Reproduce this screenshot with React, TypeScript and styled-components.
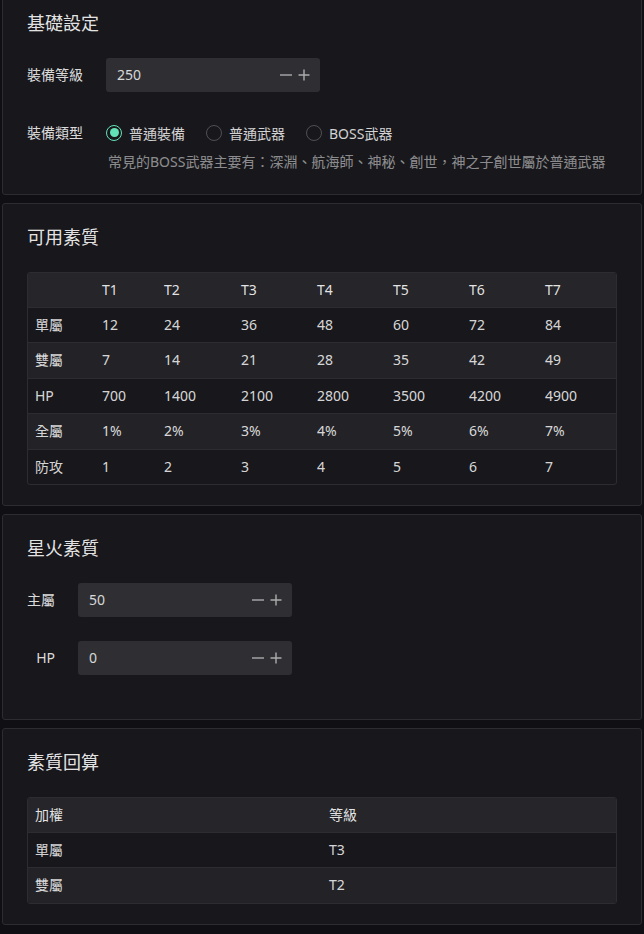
import React from "react";
import styled, { createGlobalStyle } from "styled-components";

const GlobalStyle = createGlobalStyle`
  body {
    margin: 0;
    background: #101014;
    color: rgba(255, 255, 255, 0.82);
    font-family: "Noto Sans", "Noto Sans CJK TC", sans-serif;
    font-size: 14px;
    overflow: hidden;
  }
`;

const Page = styled.div`
  display: flex;
  flex-direction: column;
  gap: 8px;
  padding: 0 2px;
  margin-top: -11px;
`;

const Card = styled.section`
  background: #18181c;
  border: 1px solid #2d2d31;
  border-radius: 3px;
`;

const CardTitle = styled.h2`
  margin: 0;
  padding: 19px 24px 20px;
  font-size: 18px;
  font-weight: 400;
  line-height: 28.8px;
  color: rgba(255, 255, 255, 0.9);
`;

const CardBody = styled.div`
  padding: 0 24px 20px;
`;

const FormItem = styled.div<{ $labelWidth: number }>`
  display: grid;
  grid-template-columns: ${(p) => p.$labelWidth}px 1fr;
  grid-template-rows: 34px 24px;
`;

const Label = styled.label`
  line-height: 34px;
  padding-right: 23px;
  text-align: right;
  white-space: nowrap;
  color: rgba(255, 255, 255, 0.86);
`;

const Feedback = styled.div`
  grid-column: 2;
  line-height: 24px;
  color: rgba(255, 255, 255, 0.52);
  white-space: nowrap;
  padding-left: 2px;
`;

const InputBox = styled.div`
  width: 214px;
  height: 34px;
  box-sizing: border-box;
  display: flex;
  align-items: center;
  padding: 0 8px 0 11px;
  background: #2f2f33;
  border-radius: 3px;
`;

const InputValue = styled.span`
  flex: 1;
  color: rgba(255, 255, 255, 0.82);
`;

const StepButtons = styled.div`
  display: flex;
  gap: 2px;
  color: rgba(255, 255, 255, 0.6);
`;

const RadioGroup = styled.div`
  display: flex;
  align-items: center;
  height: 34px;
`;

const RadioItem = styled.div`
  display: flex;
  align-items: center;
  margin-right: 13px;
`;

const RadioCircle = styled.span<{ $checked: boolean }>`
  width: 16px;
  height: 16px;
  box-sizing: border-box;
  border-radius: 50%;
  border: 1px solid ${(p) => (p.$checked ? "#63e2b7" : "rgba(255,255,255,0.24)")};
  display: flex;
  align-items: center;
  justify-content: center;

  &::after {
    content: "";
    width: 9px;
    height: 9px;
    border-radius: 50%;
    background: #63e2b7;
    display: ${(p) => (p.$checked ? "block" : "none")};
  }
`;

const RadioLabel = styled.span`
  padding: 0 8px 0 7px;
  color: rgba(255, 255, 255, 0.82);
`;

const Table = styled.table`
  width: 100%;
  table-layout: fixed;
  border-collapse: separate;
  border-spacing: 0;
  border: 1px solid #2d2d31;
  border-radius: 3px;
  overflow: hidden;
`;

const Th = styled.th<{ $w?: number }>`
  box-sizing: border-box;
  ${(p) => (p.$w ? `width: ${p.$w}px;` : "")}
  background: #26262a;
  font-weight: 400;
  text-align: left;
  padding: 6px 7px;
  line-height: 22.4px;
  color: rgba(255, 255, 255, 0.88);
  border-bottom: 1px solid #2d2d31;
`;

const Tr = styled.tr`
  &:nth-child(even) td {
    background: #232327;
  }
  &:last-child td {
    border-bottom: none;
  }
`;

const Td = styled.td`
  box-sizing: border-box;
  padding: 6px 7px;
  line-height: 22.4px;
  color: rgba(255, 255, 255, 0.84);
  border-bottom: 1px solid #2d2d31;
  white-space: nowrap;
`;

const MinusIcon = () => (
  <svg width="16" height="16" viewBox="0 0 16 16">
    <path d="M2 8H14" stroke="currentColor" strokeWidth="1.4" />
  </svg>
);

const PlusIcon = () => (
  <svg width="16" height="16" viewBox="0 0 16 16">
    <path d="M2.5 8H13.5M8 2.5V13.5" stroke="currentColor" strokeWidth="1.4" />
  </svg>
);

function NumberInput({ value }: { value: string }) {
  return (
    <InputBox>
      <InputValue>{value}</InputValue>
      <StepButtons>
        <MinusIcon />
        <PlusIcon />
      </StepButtons>
    </InputBox>
  );
}

const equipTypes = [
  { label: "普通裝備", checked: true },
  { label: "普通武器", checked: false },
  { label: "BOSS武器", checked: false },
];

const tierWidths = [62, 77, 76, 76, 76, 76, undefined];

const potentialRows = [
  { name: "單屬", values: ["12", "24", "36", "48", "60", "72", "84"] },
  { name: "雙屬", values: ["7", "14", "21", "28", "35", "42", "49"] },
  { name: "HP", values: ["700", "1400", "2100", "2800", "3500", "4200", "4900"] },
  { name: "全屬", values: ["1%", "2%", "3%", "4%", "5%", "6%", "7%"] },
  { name: "防攻", values: ["1", "2", "3", "4", "5", "6", "7"] },
];

export default function App() {
  return (
    <>
      <GlobalStyle />
      <Page>
        <Card>
          <CardTitle>基礎設定</CardTitle>
          <CardBody>
            <FormItem $labelWidth={79}>
              <Label>裝備等級</Label>
              <NumberInput value="250" />
            </FormItem>
            <FormItem $labelWidth={79}>
              <Label>裝備類型</Label>
              <RadioGroup>
                {equipTypes.map((t) => (
                  <RadioItem key={t.label}>
                    <RadioCircle $checked={t.checked} />
                    <RadioLabel>{t.label}</RadioLabel>
                  </RadioItem>
                ))}
              </RadioGroup>
              <Feedback>
                常見的BOSS武器主要有：深淵、航海師、神秘、創世，神之子創世屬於普通武器
              </Feedback>
            </FormItem>
          </CardBody>
        </Card>

        <Card>
          <CardTitle>可用素質</CardTitle>
          <CardBody>
            <Table>
              <thead>
                <tr>
                  <Th $w={67}></Th>
                  {tierWidths.map((w, i) => (
                    <Th key={i} $w={w}>
                      T{i + 1}
                    </Th>
                  ))}
                </tr>
              </thead>
              <tbody>
                {potentialRows.map((r) => (
                  <Tr key={r.name}>
                    <Td>{r.name}</Td>
                    {r.values.map((v, i) => (
                      <Td key={i}>{v}</Td>
                    ))}
                  </Tr>
                ))}
              </tbody>
            </Table>
          </CardBody>
        </Card>

        <Card>
          <CardTitle>星火素質</CardTitle>
          <CardBody>
            <FormItem $labelWidth={51}>
              <Label>主屬</Label>
              <NumberInput value="50" />
            </FormItem>
            <FormItem $labelWidth={51}>
              <Label>HP</Label>
              <NumberInput value="0" />
            </FormItem>
          </CardBody>
        </Card>

        <Card>
          <CardTitle>素質回算</CardTitle>
          <CardBody>
            <Table>
              <thead>
                <tr>
                  <Th>加權</Th>
                  <Th>等級</Th>
                </tr>
              </thead>
              <tbody>
                <Tr>
                  <Td>單屬</Td>
                  <Td>T3</Td>
                </Tr>
                <Tr>
                  <Td>雙屬</Td>
                  <Td>T2</Td>
                </Tr>
              </tbody>
            </Table>
          </CardBody>
        </Card>
      </Page>
    </>
  );
}
